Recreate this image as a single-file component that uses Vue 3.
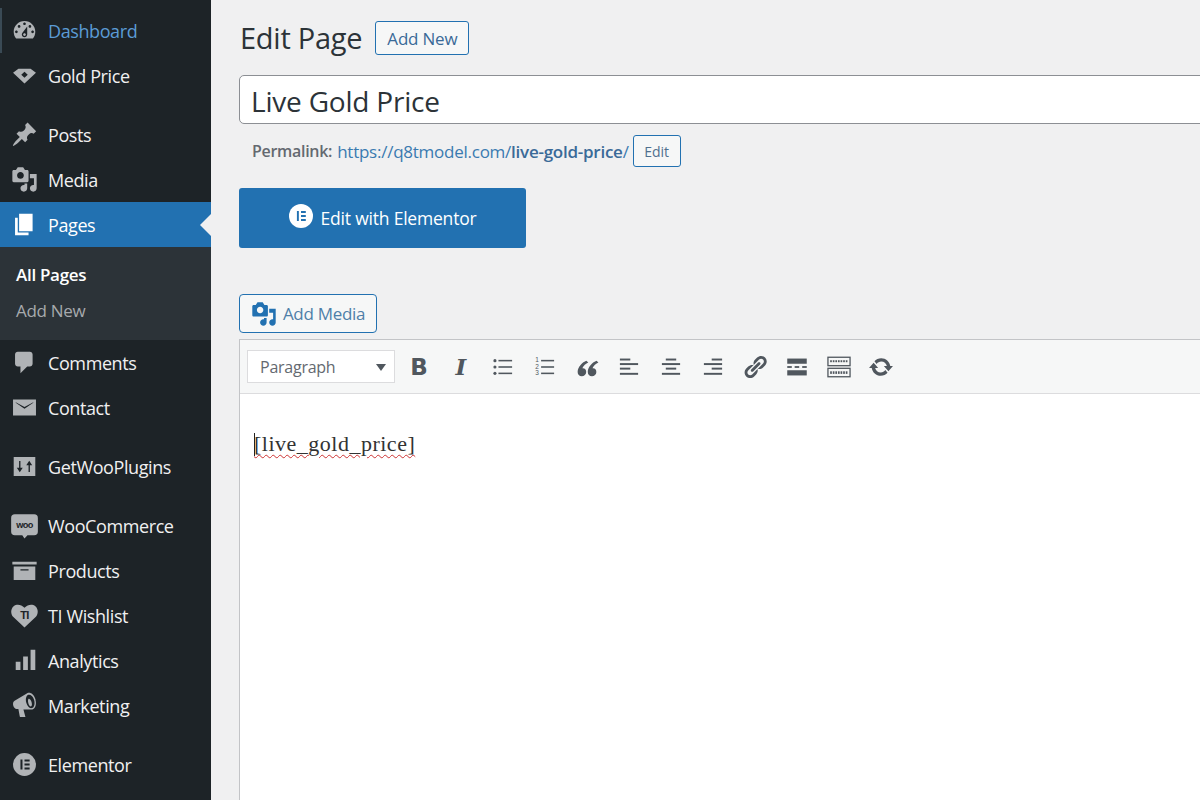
<script setup>
const menu = [
  { label: 'Dashboard', cls: 'current', d: 'M3.76 16h12.48c1.1-1.37 1.76-3.11 1.76-5 0-4.42-3.58-8-8-8s-8 3.58-8 8c0 1.89.66 3.63 1.76 5zM10 4c.55 0 1 .45 1 1s-.45 1-1 1-1-.45-1-1 .45-1 1-1zM6 6c.55 0 1 .45 1 1s-.45 1-1 1-1-.45-1-1 .45-1 1-1zm8 0c.55 0 1 .45 1 1s-.45 1-1 1-1-.45-1-1 .45-1 1-1zm-5.37 5.55L12 7v6c0 1.1-.9 2-2 2s-2-.9-2-2c0-.57.24-1.08.63-1.45zM4 10c.55 0 1 .45 1 1s-.45 1-1 1-1-.45-1-1 .45-1 1-1zm12 0c.55 0 1 .45 1 1s-.45 1-1 1-1-.45-1-1 .45-1 1-1zm-5 3c0-.55-.45-1-1-1s-1 .45-1 1 .45 1 1 1 1-.45 1-1z' },
  { label: 'Gold Price', d: 'M1.5 8 5.5 5h9l4 3L10 16zM10 7.2 7.6 9.4 10 11.6l2.4-2.2z', sep: true },
  { label: 'Posts', d: 'M10.44 3.02l1.82-1.82 6.36 6.35-1.83 1.82c-1.05-.68-2.48-.57-3.41.36l-.75.75c-.92.93-1.04 2.35-.35 3.41l-1.83 1.82-2.41-2.41-2.8 2.79c-.42.42-3.38 2.71-3.8 2.29s1.86-3.39 2.28-3.81l2.79-2.79L4.1 9.36l1.83-1.82c1.05.69 2.48.57 3.4-.36l.75-.75c.93-.92 1.05-2.35.36-3.41z' },
  { label: 'Media', d: 'M13 11V4c0-.55-.45-1-1-1h-1.67L9 1H5L3.67 3H2c-.55 0-1 .45-1 1v7c0 .55.45 1 1 1h10c.55 0 1-.45 1-1zM7 4.5c1.38 0 2.5 1.12 2.5 2.5S8.38 9.5 7 9.5 4.5 8.38 4.5 7 5.62 4.5 7 4.5zM14 6h5v10.5c0 1.38-1.12 2.5-2.5 2.5S14 17.88 14 16.5s1.12-2.5 2.5-2.5c.17 0 .34.02.5.05V9h-3V6zm-4 8.05V13h2v3.5c0 1.38-1.12 2.5-2.5 2.5S7 17.88 7 16.5 8.12 14 9.5 14c.17 0 .34.02.5.05z' },
  { label: 'Pages', cls: 'active', d: 'M6 15V2h10v13H6zm-1 1h8v2H3V5h2v11z' },
  { label: 'Comments', d: 'M5 2h9c1.1 0 2 .9 2 2v7c0 1.1-.9 2-2 2h-2l-5 5v-5H5c-1.1 0-2-.9-2-2V4c0-1.1.9-2 2-2z' },
  { label: 'Contact', d: 'M1.5 4h17v12h-17zM3.5 6.2v.2L10 11l6.5-4.6v-.2L10 9.6z', sep: true },
  { label: 'GetWooPlugins', d: 'M2 3h16v14H2zM6 6v5H4.3l2.2 3.2L8.7 11H7V6zM13 14V9h-1.7l2.2-3.2L15.700 9H14v5z', sep: true },
  { label: 'WooCommerce', big: true, d: 'M3.500 2.500h13a2.500 2.500 0 0 1 2.500 2.500v9a2.500 2.500 0 0 1-2.500 2.500H12l-2 2.300-1.500-2.300h-5A2.500 2.500 0 0 1 1 14V5a2.500 2.500 0 0 1 2.500-2.500z', text: 'woo', textSize: 6.2, textY: 12 },
  { label: 'Products', d: 'M19 3.500v2H1v-2h18zM2 7h16v10H2V7zm11 3V9H7v1h6z' },
  { label: 'TI Wishlist', big: true, d: 'M10 18 2.500 11C.5 9 .6 5.500 2.700 3.700c2-1.600 5-1.300 7.300 1 2.300-2.300 5.300-2.600 7.300-1 2.100 1.800 2.200 5.300.2 7.300z', text: 'TI', textSize: 7.500, textY: 12.200 },
  { label: 'Analytics', d: 'M18 2v15h-3.500V2H18zM12.500 7v10H9V7h3.500zM7 11v6H3.500v-6H7z' },
  { label: 'Marketing', d: 'M18.150 5.940c.46 1.620.38 3.220-.02 4.480-.42 1.280-1.260 2.180-2.300 2.480-.16.06-.26.06-.4.06-.06.02-.12.02-.18.02-.06.02-.14.02-.22.02H9.200l1.500 5.500H6.950c-.1 0-.26-.06-.34-.16-.08-.08-.16-.2-.14-.34l-1-5.500H4.250c-.5.06-1.080-.18-1.540-.62s-.88-1.080-1.060-1.880c-.24-.8-.2-1.560-.02-2.200.18-.62.58-1.080 1.060-1.300l9.020-5.420c.1-.06.18-.1.24-.16.22-.14.44-.22.74-.3 1.040-.3 2.240.1 3.220 1 .98.88 1.800 2.240 2.260 3.860zm-2.600 5.980c.4-.1.740-.34 1.040-.7.58-.7.86-1.760.86-3.040 0-.64-.1-1.300-.28-1.980-.34-1.360-1.020-2.500-1.780-3.240s-1.680-1.100-2.460-.88c-.82.22-1.400.96-1.700 2-.32 1.040-.28 2.360.06 3.720.38 1.360 1 2.500 1.800 3.240.78.74 1.620 1.100 2.480.88zM13 5c.8-.2 2.500 1.500 2.500 4 0 1.500-.7 1.800-1.300 1.600C13 10 12 6 13 5z', sep: true },
  { label: 'Elementor', d: 'M10 1.500a8.500 8.500 0 1 0 0 17 8.500 8.500 0 0 0 0-17zM7 6.300h1.500v7.400H7zM10 6.300h3.800v1.500H10zM10 9.250h3.800v1.500H10zM10 12.200h3.800v1.500H10z' },
  { label: '', d: 'M2 4h6l2 2h8v11H2z' },
]

const tools = [
  { t: 'B', cls: 'bold' }, { t: 'I', cls: 'ital' },
  { r: [[6.500, 4.500, 10.500, 1.200], [6.500, 9.400, 10.500, 1.200], [6.500, 14.300, 10.500, 1.200]], c: [[3.800, 5.100], [3.800, 10], [3.800, 14.900]] },
  { r: [[7, 4.500, 10, 1.200], [7, 9.400, 10, 1.200], [7, 14.300, 10, 1.200]], n: true },
  { big: true, d: 'M9.490 13.220c0-1.340-.79-2.420-2.110-2.420-.12 0-.26-.02-.38 0 .61-1.450 2.350-3 3.830-3.610L9.580 6C7.200 6.900 4 9.800 4 13.220 4 14.750 5 16 6.680 16c1.530 0 2.810-1.250 2.810-2.780zM16 13.220c0-1.340-.79-2.420-2.110-2.420-.12 0-.26-.02-.38 0 .6-1.450 2.350-3 3.820-3.610L16.090 6c-2.380.9-5.590 3.800-5.590 7.220 0 1.530 1 2.780 2.680 2.780 1.530 0 2.820-1.250 2.820-2.780z' },
  { r: [[3, 3.500, 8, 1.500], [3, 7, 14, 1.500], [3, 10.500, 8, 1.500], [3, 14.500, 14, 1.500]] },
  { r: [[6, 3.500, 8, 1.500], [3, 7, 14, 1.500], [6, 10.500, 8, 1.500], [3, 14.500, 14, 1.500]] },
  { r: [[9, 3.500, 8, 1.500], [3, 7, 14, 1.500], [9, 10.500, 8, 1.500], [3, 14.500, 14, 1.500]] },
  { d: 'M17.740 2.760c1.680 1.690 1.680 4.410 0 6.100l-1.530 1.520c-1.120 1.120-2.700 1.470-4.140 1.090l2.620-2.610.76-.77.76-.76c.84-.84.84-2.200 0-3.040-.84-.85-2.200-.85-3.040 0l-.77.76-3.380 3.380c-.37-1.440-.02-3.020 1.100-4.140l1.520-1.530c1.690-1.680 4.420-1.680 6.100 0zM8.590 13.430l5.340-5.340c.42-.42.42-1.100 0-1.520-.44-.43-1.130-.39-1.530 0l-5.330 5.340c-.42.42-.42 1.100 0 1.520.44.43 1.130.39 1.520 0zm-.76 2.290l4.140-4.150c.38 1.440.03 3.020-1.090 4.140l-1.520 1.530c-1.690 1.680-4.410 1.680-6.100 0-1.680-1.680-1.680-4.420 0-6.100l1.530-1.520c1.120-1.120 2.700-1.470 4.140-1.100l-4.140 4.150c-.85.840-.85 2.200 0 3.050.84.84 2.200.84 3.040 0z' },
  { r: [[2.500, 3.500, 15, 4], [2.500, 9.300, 3.500, 1.400], [8.200, 9.300, 3.500, 1.400], [14, 9.300, 3.500, 1.400], [2.500, 12.500, 15, 4]] },
  { kbd: true },
  { d: 'M10.200 3.280c3.530 0 6.430 2.610 6.920 6h2.080l-3.500 4-3.500-4h2.320c-.45-1.970-2.210-3.450-4.320-3.450-1.450 0-2.730.71-3.540 1.780L4.950 5.660C6.230 4.200 8.110 3.280 10.200 3.280zm-.4 13.440c-3.520 0-6.430-2.610-6.920-6H.8l3.500-4c1.170 1.330 2.330 2.670 3.500 4H5.480c.45 1.970 2.210 3.450 4.320 3.450 1.450 0 2.730-.71 3.540-1.770l1.710 1.950c-1.280 1.460-3.150 2.370-5.250 2.370z' },
]
const mediaIcon = menu[3].d
const kbdDots = [0, 1, 2, 3, 4, 5, 6]
</script>

<template>
  <div class="page">
    <aside class="side">
      <template v-for="(m, idx) in menu" :key="idx">
        <a class="row" :class="[m.cls, { sep: m.sep }]">
          <svg class="ico" :class="{ big: m.big }" viewBox="0 0 20 20">
            <path :d="m.d" fill-rule="evenodd" />
            <text v-if="m.text" x="10" :y="m.textY" text-anchor="middle" class="ico-text" :font-size="m.textSize">{{ m.text }}</text>
          </svg>
          <span v-if="m.label">{{ m.label }}</span>
        </a>
        <div v-if="m.cls === 'active'" class="sub">
          <a class="sub-on">All Pages</a>
          <a>Add New</a>
        </div>
      </template>
    </aside>

    <main class="main">
      <div class="head">
        <h1>Edit Page</h1>
        <a class="btn add-new">Add New</a>
      </div>
      <div class="title-box">Live Gold Price</div>
      <div class="perma">
        <b>Permalink:</b>
        <a class="url">https://q8tmodel.com/<strong>live-gold-price</strong>/</a>
        <a class="btn edit">Edit</a>
      </div>
      <a class="elementor">
        <svg class="el-ico" viewBox="0 0 20 20">
          <circle cx="10" cy="10" r="10" fill="#fff" />
          <path d="M6.600 5.800h1.600v8.400H6.600zM10 5.800h4v1.600h-4zM10 9.200h4v1.600h-4zM10 12.600h4v1.600h-4z" fill="#2271b1" />
        </svg>
        Edit with Elementor
      </a>
      <a class="btn media">
        <svg class="m-ico" viewBox="0 0 20 20"><path :d="mediaIcon" fill-rule="evenodd" /></svg>
        Add Media
      </a>
      <section class="editor">
        <div class="bar">
          <div class="select">Paragraph<i class="caret"></i></div>
          <span v-for="(t, i) in tools" :key="i" class="tool">
            <span v-if="t.t" :class="t.cls">{{ t.t }}</span>
            <svg v-else viewBox="0 0 20 20" class="tool-ico" :class="{ big: t.big }">
              <path v-if="t.d" :d="t.d" />
              <rect v-for="(r, j) in t.r" :key="j" :x="r[0]" :y="r[1]" :width="r[2]" :height="r[3]" />
              <circle v-for="(c, j) in t.c" :key="'c' + j" :cx="c[0]" :cy="c[1]" r="1.200" />
              <template v-if="t.n">
                <text x="2.500" y="6.500" class="num">1</text>
                <text x="2.500" y="11.500" class="num">2</text>
                <text x="2.500" y="16.500" class="num">3</text>
              </template>
              <template v-if="t.kbd">
                <g fill="none" stroke="#50575e" stroke-width="1">
                  <rect x="1.500" y="2.500" width="17" height="6.500" />
                  <rect x="1.500" y="11" width="17" height="6.500" />
                </g>
                <rect v-for="k in kbdDots" :key="'a' + k" :x="3.200 + k * 2" y="4.800" width="1.300" height="1.500" />
                <rect v-for="k in kbdDots" :key="'b' + k" :x="3.200 + k * 2" y="13.300" width="1.300" height="2" />
              </template>
            </svg>
          </span>
        </div>
        <div class="body"><span class="caret-line"></span><span class="sc">[live_gold_price]</span></div>
      </section>
    </main>
  </div>
</template>

<style>
html, body { margin: 0; overflow: hidden; background: #f0f0f1; }
</style>

<style scoped>
.page {
  display: flex;
  width: 1200px;
  height: 800px;
  overflow: hidden;
  background: #f0f0f1;
  font-family: "Open Sans", "Noto Sans", sans-serif;
}
.side {
  width: 211px;
  flex: none;
  height: 800px;
  padding-top: 8px;
  box-sizing: border-box;
  background: #1d2327;
  color: #f0f0f1;
  overflow: hidden;
}
.row {
  display: flex;
  align-items: center;
  height: 45px;
  padding-left: 11px;
  font-size: 18px;
  letter-spacing: -0.4px;
  position: relative;
}
.row.sep { margin-bottom: 14px; }
.row span { margin-left: 10px; }
.ico { width: 27px; height: 27px; fill: #b0b3b6; flex: none; }
.ico.big { transform: scale(1.1); }
.ico-text { fill: #1d2327; font-family: "Liberation Sans", sans-serif; font-weight: 700; stroke: none; }
.current { color: #5b9bd5; box-shadow: inset 2px 0 0 #3a4a55; }
.active { background: #2271b1; color: #fff; }
.active .ico { fill: #fff; }
.active::after {
  content: "";
  position: absolute;
  right: 0;
  top: 12px;
  border: 11px solid transparent;
  border-right-color: #f0f0f1;
  border-left-width: 0;
}
.sub {
  height: 93px;
  box-sizing: border-box;
  padding: 16px 0 0 16px;
  background: #2c3338;
  font-size: 17px;
  letter-spacing: -0.3px;
  color: #a7aaad;
  display: flex;
  flex-direction: column;
  gap: 13px;
}
.sub a { line-height: 23px; }
.sub-on { color: #fff; font-weight: 600; }

.main {
  flex: 1;
  min-width: 0;
  padding: 21px 0 0 28px;
  display: flex;
  flex-direction: column;
  align-items: flex-start;
  color: #1d2327;
}
.main > * { flex: none; }
.head { display: flex; align-items: center; height: 34px; }
h1 {
  margin: -2px 13px 0 1px;
  font-size: 29px;
  font-weight: 400;
  letter-spacing: -0.25px;
  color: #2c3338;
}
.btn {
  display: flex;
  align-items: center;
  justify-content: center;
  box-sizing: border-box;
  border: 1.500px solid #2271b1;
  border-radius: 3px;
  background: #f6f7f7;
  color: #2271b1;
}
.add-new { width: 94px; height: 34px; font-size: 17px; letter-spacing: -0.2px; color: #3a6a98; font-weight: 500; }
.title-box {
  width: 1000px;
  height: 49px;
  margin-top: 20px;
  box-sizing: border-box;
  border: 1.500px solid #8c8f94;
  border-radius: 5px;
  background: #fff;
  padding: 2px 0 0 11px;
  display: flex;
  align-items: center;
  font-size: 28px;
  color: #2c3338;
  letter-spacing: -0.2px;
}
.perma {
  display: flex;
  align-items: center;
  height: 32px;
  margin: 11px 0 0 13px;
  font-size: 16px;
  letter-spacing: -0.3px;
  color: #646970;
}
.perma b { font-weight: 600; }
.url { margin-left: 5px; color: #3a7ab0; font-size: 17px; letter-spacing: -0.25px; }
.url strong { font-weight: 600; color: #3a6a98; }
.edit { width: 48px; height: 32px; margin-left: 4px; font-size: 14px; color: #50708f; letter-spacing: 0; }
.elementor {
  width: 287px;
  height: 60px;
  margin-top: 21px;
  border-radius: 3px;
  background: #2271b1;
  color: #fff;
  font-size: 17.500px;
  letter-spacing: -0.2px;
  display: flex;
  align-items: center;
  justify-content: center;
  gap: 8px;
}
.el-ico { width: 24px; height: 24px; margin-top: -4px; }
.media {
  width: 138px;
  height: 39px;
  margin-top: 46px;
  gap: 6px;
  font-size: 17px;
  letter-spacing: -0.3px;
  color: #4f7fa8;
  border-radius: 4px;
}
.m-ico { width: 26px; height: 26px; fill: #2271b1; }
.editor {
  width: 1000px;
  height: 470px;
  margin-top: 6px;
  box-sizing: border-box;
  border: 1px solid #c3c4c7;
  border-bottom: 0;
  background: #fff;
}
.bar {
  display: flex;
  align-items: center;
  height: 53px;
  padding-left: 7px;
  background: #f6f7f7;
  border-bottom: 1px solid #dcdcde;
}
.select {
  width: 148px;
  height: 33px;
  box-sizing: border-box;
  margin-right: 3px;
  padding-left: 12px;
  background: #fff;
  border: 1px solid #dcdcde;
  display: flex;
  align-items: center;
  font-size: 16px;
  letter-spacing: -0.25px;
  color: #646970;
  position: relative;
}
.caret {
  position: absolute;
  right: 8px;
  top: 13px;
  border-style: solid;
  border-width: 7px 5px 0;
  border-color: #50575e transparent transparent;
}
.tool {
  width: 42px;
  flex: none;
  display: flex;
  justify-content: center;
  align-items: center;
  height: 32px;
  color: #50575e;
}
.tool-ico { width: 26px; height: 26px; fill: #50575e; }
.tool-ico.big { transform: scale(1.2); }
.num { font-size: 5px; font-family: "Liberation Sans", sans-serif; fill: #50575e; }
.bold { font: 700 23px "DejaVu Sans", sans-serif; }
.ital { font: italic 700 23px "DejaVu Serif", serif; }
.body {
  padding: 37px 0 0 14px;
  display: flex;
  align-items: center;
  font: 22px/26px "Liberation Serif", serif;
  letter-spacing: 0.5px;
  color: #333;
}
.caret-line { width: 1px; height: 23px; background: #222; margin-right: -1px; }
.sc { text-decoration: underline wavy #c33 1px; text-underline-offset: 3px; }
</style>
